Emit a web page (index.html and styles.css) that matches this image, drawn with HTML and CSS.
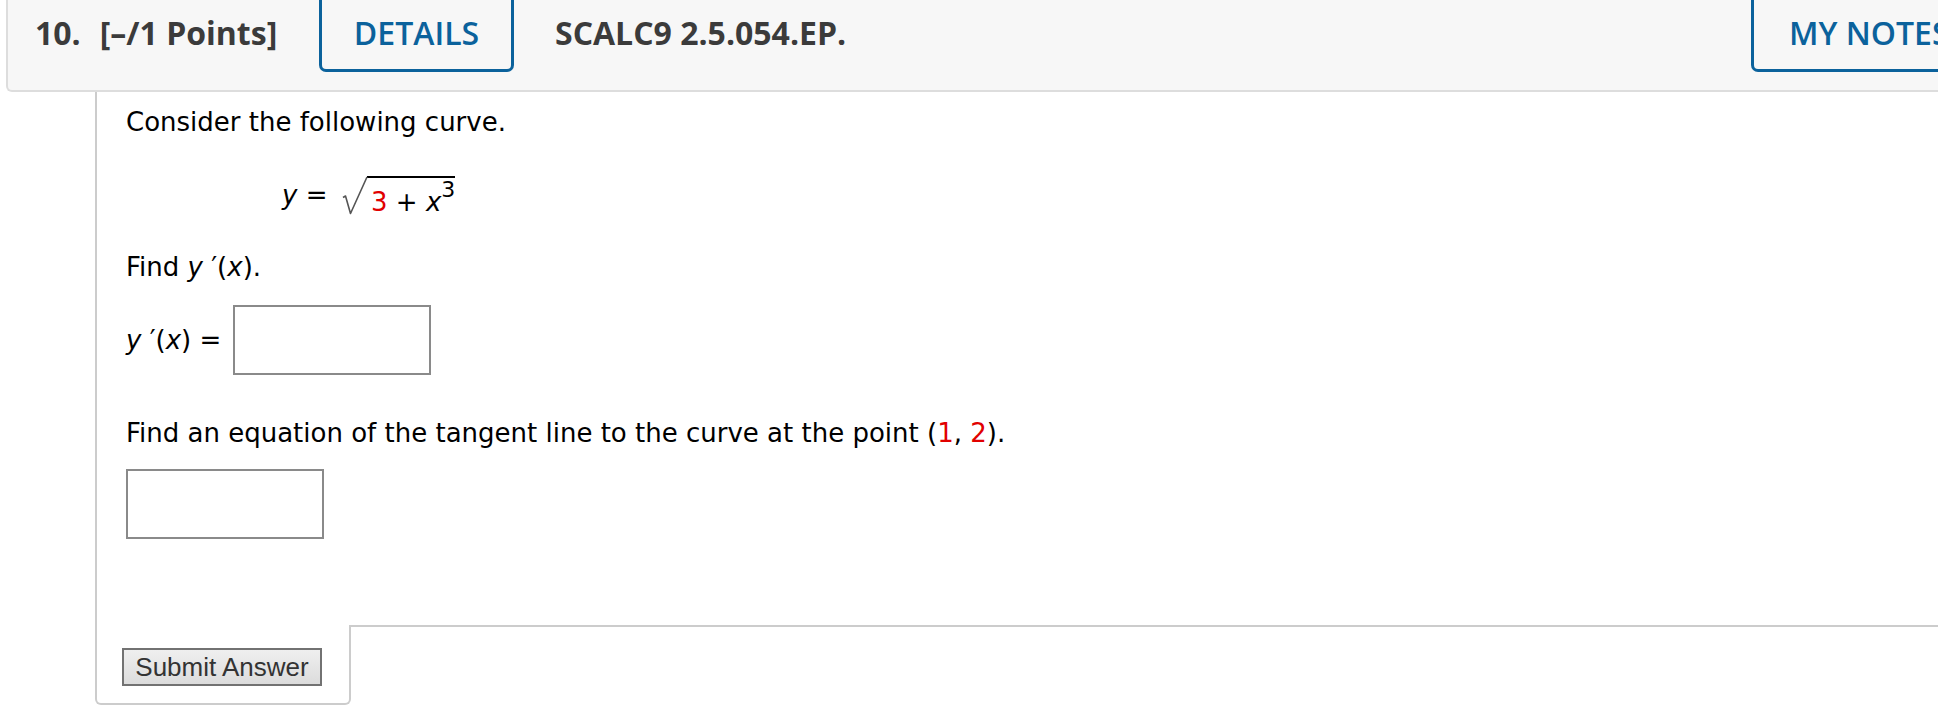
FILE: index.html
```html
<!DOCTYPE html>
<html>
<head>
<meta charset="utf-8">
<title>SCALC9 2.5.054.EP.</title>
<link rel="stylesheet" href="styles.css">
</head>
<body>
<div class="page">
  <div class="header">
    <div class="title"><span class="num">10.</span><span>[–/1 Points]</span></div>
    <div class="tab details">DETAILS</div>
    <div class="code">SCALC9 2.5.054.EP.</div>
    <div class="tab notes">MY NOTES</div>
  </div>
  <div class="card">
    <div class="question">
      <p class="line">Consider the following curve.</p>
      <div class="eq"><span class="lhs"><i>y</i> =</span><span class="sqrt"><svg class="radical" width="26" height="40" viewBox="0 0 26 40"><path d="M1 21.5 L3.5 20 L8.5 37.5 L25 1" fill="none" stroke="#555" stroke-width="1.6" stroke-linejoin="round"/></svg><span class="rad"><span class="red">3</span> + <i>x</i><sup>3</sup></span></span></div>
      <p class="line find">Find <i>y</i> ′(<i>x</i>).</p>
      <div class="answer-row"><span class="label"><i>y</i> ′(<i>x</i>) =</span><span class="box"></span></div>
      <p class="line tangent">Find an equation of the tangent line to the curve at the point (<span class="red">1</span>, <span class="red">2</span>).</p>
      <div class="box box2"></div>
    </div>
    <div class="footer">
      <div class="submit-tab"><button class="submit" type="button">Submit Answer</button></div>
      <div class="rest"></div>
    </div>
  </div>
</div>
</body>
</html>
```
FILE: styles.css
```css
html, body {
  margin: 0;
  padding: 0;
  background: #ffffff;
  overflow: hidden;
}
.page {
  width: 1938px;
  height: 722px;
  overflow: hidden;
}
.header {
  display: flex;
  align-items: flex-start;
  margin-left: 6px;
  width: 2000px;
  height: 92px;
  box-sizing: border-box;
  background: #f7f7f7;
  border-left: 2px solid #dddddd;
  border-bottom: 2px solid #dddddd;
  border-bottom-left-radius: 6px;
  font-family: "Open Sans", "Noto Sans", sans-serif;
  font-size: 32px;
  line-height: 44px;
  color: #3b3b3b;
}
.title {
  width: 311px;
  box-sizing: border-box;
  padding: 11px 0 0 27px;
  font-weight: 700;
  white-space: nowrap;
}
.title .num {
  margin-right: 19px;
}
.tab {
  box-sizing: border-box;
  height: 72px;
  padding-top: 11px;
  border: 3px solid #0b629c;
  border-top: none;
  border-radius: 0 0 7px 7px;
  color: #0b629c;
  font-weight: 600;
  white-space: nowrap;
}
.details {
  width: 195px;
  text-align: center;
}
.code {
  margin-left: 41px;
  padding-top: 11px;
  font-weight: 700;
  white-space: nowrap;
}
.notes {
  margin-left: auto;
  width: 255px;
  padding-left: 35px;
}
.card {
  margin-left: 95px;
  font-family: "DejaVu Sans", Verdana, sans-serif;
  font-size: 26px;
  color: #000000;
}
.question {
  border-left: 2px solid #cccccc;
  padding: 15px 0 86px 29px;
}
.line {
  margin: 0;
  line-height: 30px;
}
.eq {
  margin-top: 39px;
  padding-left: 156px;
  line-height: 30px;
  white-space: nowrap;
}
.lhs {
  display: inline-block;
  width: 60px;
}
.sqrt {
  position: relative;
  display: inline-block;
  padding-left: 25px;
  vertical-align: -7px;
}
.radical {
  position: absolute;
  left: 0;
  top: 0;
}
.rad {
  display: inline-block;
  border-top: 2px solid #000000;
  padding: 9px 0 0 4px;
  line-height: 30px;
}
.rad sup {
  font-size: 22px;
  line-height: 0;
  vertical-align: 14px;
}
.red {
  color: #e10000;
}
.find {
  margin-top: 35px;
}
.answer-row {
  display: flex;
  align-items: center;
  margin-top: 23px;
  line-height: 30px;
}
.answer-row .box {
  margin-left: 12px;
}
.box {
  display: block;
  width: 198px;
  height: 70px;
  box-sizing: border-box;
  border: 2px solid #8a8a8a;
  background: #ffffff;
}
.tangent {
  margin-top: 43px;
}
.box2 {
  margin-top: 21px;
}
.footer {
  display: flex;
}
.submit-tab {
  width: 256px;
  height: 80px;
  box-sizing: border-box;
  border: 2px solid #cccccc;
  border-top: none;
  border-radius: 0 0 6px 6px;
  padding: 23px 0 0 25px;
}
.rest {
  flex: 1;
  border-top: 2px solid #cccccc;
}
.submit {
  display: block;
  width: 200px;
  height: 38px;
  box-sizing: border-box;
  margin: 0;
  padding: 0;
  border: 2px solid #727272;
  border-radius: 0;
  background: linear-gradient(#efefef, #dcdcdc);
  color: #333333;
  font-family: "Liberation Sans", Arial, sans-serif;
  font-size: 26px;
  line-height: 34px;
}
```
